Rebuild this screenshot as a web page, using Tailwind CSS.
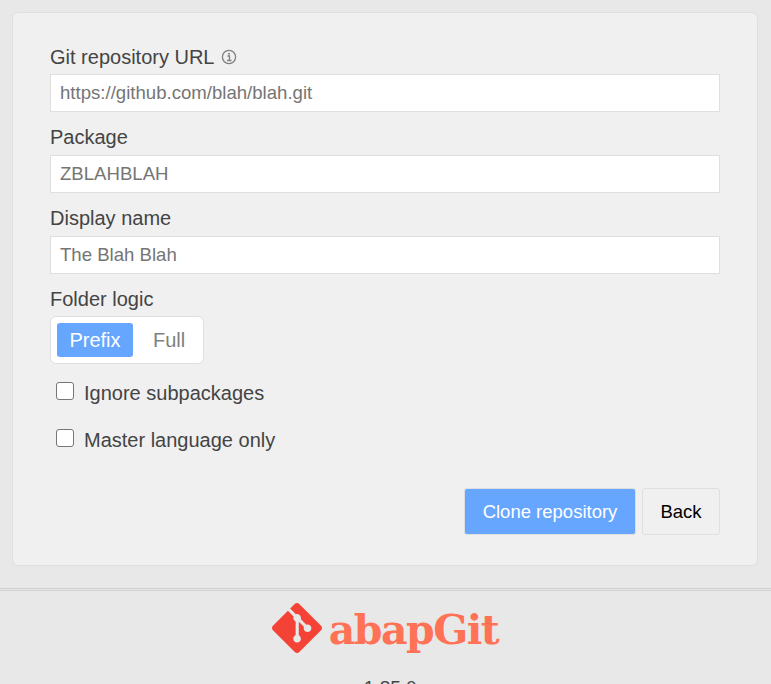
<!DOCTYPE html>
<html>
<head>
    <title>abapGit - Clone</title>
    <script src="https://cdn.jsdelivr.net/npm/@tailwindcss/browser@4"></script>
</head>
<body class="bg-[#e8e8e8] h-[684px] overflow-hidden font-['Liberation_Sans',Arial,sans-serif] text-[#444]">
    <div class="pl-3 pr-[13px] pt-3">
        <form class="h-[554px] bg-[#f0f0f0] border border-[#dfdfdf] rounded-md px-[37px] pt-[29px]">
            <label class="flex items-center h-[30px] mb-[2px] text-[20px]">
                Git repository URL
                <svg class="ml-[6px] w-[16px] h-[16px]" viewBox="0 0 16 16" fill="none">
                    <circle cx="8" cy="8" r="6.6" stroke="#808080" stroke-width="1.3"/>
                    <circle cx="8" cy="4.7" r="1" fill="#808080"/>
                    <path d="M6.4 7H8.500V11.500M6 11.500H10.500" stroke="#808080" stroke-width="1.3"/>
                </svg>
            </label>
            <input type="text" placeholder="https://github.com/blah/blah.git" class="block w-full h-[38px] bg-white border border-[#dfdfdf] px-[9px] text-[18.6px] placeholder:text-[#757575] outline-none">
            <label class="flex items-center h-[30px] mt-[10px] mb-[3px] text-[20px]">Package</label>
            <input type="text" placeholder="ZBLAHBLAH" class="block w-full h-[38px] bg-white border border-[#dfdfdf] px-[9px] text-[18.6px] placeholder:text-[#757575] outline-none">
            <label class="flex items-center h-[30px] mt-[10px] mb-[3px] text-[20px]">Display name</label>
            <input type="text" placeholder="The Blah Blah" class="block w-full h-[38px] bg-white border border-[#dfdfdf] px-[9px] text-[18.6px] placeholder:text-[#757575] outline-none">
            <label class="flex items-center h-[30px] mt-[10px] mb-[3px] text-[20px]">Folder logic</label>
            <div class="flex items-center h-[48px] w-[154px] -mt-[1px] bg-white border border-[#dfdfdf] rounded-md px-[6px] text-[20px]">
                <span class="flex items-center justify-center shrink-0 w-[76px] h-[34px] bg-[#66a6ff] text-white rounded-[3px]">Prefix</span>
                <span class="pl-[20px] text-[#808080]">Full</span>
            </div>
            <label class="flex items-center gap-[10px] mt-[5px] ml-[6px] h-[47px] text-[20px]">
                <input type="checkbox" class="appearance-none w-[18px] h-[18px] bg-white border border-[#767676] rounded-[3px] -mt-[3px]">
                Ignore subpackages
            </label>
            <label class="flex items-center gap-[10px] ml-[6px] h-[47px] text-[20px]">
                <input type="checkbox" class="appearance-none w-[18px] h-[18px] bg-white border border-[#767676] rounded-[3px] -mt-[3px]">
                Master language only
            </label>
            <div class="flex justify-end gap-[6px] mt-[25px]">
                <button type="button" class="w-[172px] h-[47px] bg-[#66a6ff] border border-[#dfdfdf] rounded-[3px] text-white text-[18.5px]">Clone repository</button>
                <button type="button" class="w-[78px] h-[47px] bg-[#f0f0f0] border border-[#dfdfdf] rounded-[3px] text-black text-[18.5px]">Back</button>
            </div>
        </form>
    </div>
    <footer class="mt-[22px] border-t-3 border-double border-[#d0d0d0] flex flex-col items-center">
        <div class="flex items-center mt-[11px] -ml-[1px] h-[54px]">
            <svg class="w-[50px] h-[50px] -mt-[2px]" viewBox="0 0 24 24">
                <path fill="#f44336" d="M23.546 10.93L13.067.452c-.604-.603-1.582-.603-2.188 0L8.708 2.627l2.76 2.76c.645-.215 1.379-.07 1.889.441.516.515.658 1.258.438 1.9l2.658 2.66c.645-.223 1.387-.078 1.9.435.721.72.721 1.884 0 2.604-.719.719-1.881.719-2.6 0-.539-.541-.674-1.337-.404-1.996L12.86 8.955v6.525c.176.086.342.203.488.348.713.721.713 1.883 0 2.6-.719.721-1.889.721-2.609 0-.719-.719-.719-1.879 0-2.598.182-.18.387-.316.605-.406V8.835c-.217-.091-.424-.222-.6-.401-.545-.545-.676-1.342-.396-2.009L7.636 3.7.45 10.881c-.6.605-.6 1.584 0 2.189l10.48 10.477c.604.604 1.582.604 2.186 0l10.43-10.43c.605-.603.605-1.582 0-2.187"/>
            </svg>
            <span class="ml-[7px] mt-[3px] font-['DejaVu_Serif',serif] font-bold text-[#ff7256] text-[41px] leading-none tracking-[-1.500px]">abapGit</span>
        </div>
        <div class="mt-[18px] text-[19px] text-[#444]">v1.85.0</div>
    </footer>
</body>
</html>
